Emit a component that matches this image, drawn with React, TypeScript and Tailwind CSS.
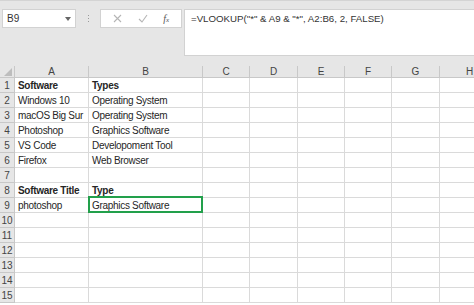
import React from 'react';

const COLS = ['A', 'B', 'C', 'D', 'E', 'F', 'G', 'H'];

const DATA: Record<number, { a?: string; b?: string; bold?: boolean }> = {
    1: { a: 'Software', b: 'Types', bold: true },
    2: { a: 'Windows 10', b: 'Operating System' },
    3: { a: 'macOS Big Sur', b: 'Operating System' },
    4: { a: 'Photoshop', b: 'Graphics Software' },
    5: { a: 'VS Code', b: 'Developoment Tool' },
    6: { a: 'Firefox', b: 'Web Browser' },
    8: { a: 'Software Title', b: 'Type', bold: true },
    9: { a: 'photoshop', b: 'Graphics Software' },
};

const ROWS = Array.from({ length: 15 }, (_, i) => i + 1);

export default function App() {
    return (
        <div className="w-[474px] h-[305px] overflow-hidden bg-white font-['Liberation_Sans',sans-serif] text-[#222]">
            {/* Formula bar */}
            <div className="h-[66px] bg-[#e6e6e6] flex items-start gap-[2px] pl-[2px] pt-[8px] border-t border-[#d4d4d4]">
                <div className="w-[74px] h-[19px] bg-white border border-[#d2d2d2] flex items-center justify-between pl-[4px] pr-[4px]">
                    <span className="text-[10px] text-[#333]">B9</span>
                    <span className="w-0 h-0 border-l-[3px] border-r-[3px] border-t-[4px] border-l-transparent border-r-transparent border-t-[#666]" />
                </div>
                <div className="w-[20px] h-[19px] flex flex-col items-center justify-center gap-[2px]">
                    <span className="w-[1px] h-[1px] bg-[#9a9a9a]" />
                    <span className="w-[1px] h-[1px] bg-[#9a9a9a]" />
                    <span className="w-[1px] h-[1px] bg-[#9a9a9a]" />
                </div>
                <div className="w-[82px] h-[19px] bg-white border border-[#d2d2d2] flex items-center justify-around px-[4px]">
                    <svg width="9" height="9" viewBox="0 0 9 9">
                        <path d="M1 1L8 8M8 1L1 8" stroke="#b5b5b5" strokeWidth="1.1" fill="none" />
                    </svg>
                    <svg width="10" height="9" viewBox="0 0 10 9">
                        <path d="M1 5L4 8L9 1" stroke="#b5b5b5" strokeWidth="1.1" fill="none" />
                    </svg>
                    <span className="font-['Liberation_Serif',serif] italic text-[10px] text-[#555] leading-none">
                        f<span className="text-[7px]">x</span>
                    </span>
                </div>
                <div className="flex-1 h-[47px] bg-white border border-[#d2d2d2] border-r-0 pl-[6px] pt-[2px] text-[9.7px] leading-[14px] text-[#333] whitespace-nowrap">
                    =VLOOKUP("*" &amp; A9 &amp; "*", A2:B6, 2, FALSE)
                </div>
            </div>

            {/* Grid */}
            <div className="grid grid-cols-[15px_74px_114px_47px_48px_47px_47px_48px_60px] grid-rows-[12px] auto-rows-[15px] text-[10px] tracking-[-0.3px] text-[#262626]">
                <div className="bg-[#e6e6e6] border-r border-b border-[#c8c8c8] flex items-end justify-end pr-[2px] pb-[1px]">
                    <svg width="8" height="8" viewBox="0 0 8 8">
                        <path d="M8 0L8 8L0 8Z" fill="#bdbdbd" />
                    </svg>
                </div>
                {COLS.map((c) => (
                    <div
                        key={c}
                        className="bg-[#e6e6e6] border-r border-b border-[#c8c8c8] flex items-center justify-center text-[10px] tracking-normal text-[#444]"
                    >
                        {c}
                    </div>
                ))}
                {ROWS.map((r) => {
                    const d = DATA[r] || {};
                    return (
                        <React.Fragment key={r}>
                            <div className="bg-[#e6e6e6] border-r border-b border-[#c8c8c8] flex items-center justify-center text-[10px] tracking-normal text-[#444]">
                                {r}
                            </div>
                            <div className={`border-r border-b border-[#dadada] flex items-center pl-[3px] whitespace-nowrap ${d.bold ? 'font-bold' : ''}`}>
                                {d.a}
                            </div>
                            <div className={`relative border-r border-b border-[#dadada] flex items-center pl-[3px] whitespace-nowrap ${d.bold ? 'font-bold' : ''}`}>
                                {d.b}
                                {r === 9 && (
                                    <div className="absolute -left-[1px] -top-[2px] -right-[1px] -bottom-[1px] border-2 border-[#22a04b]" />
                                )}
                            </div>
                            {COLS.slice(2).map((c) => (
                                <div key={c} className="border-r border-b border-[#dadada]" />
                            ))}
                        </React.Fragment>
                    );
                })}
            </div>
        </div>
    );
}
